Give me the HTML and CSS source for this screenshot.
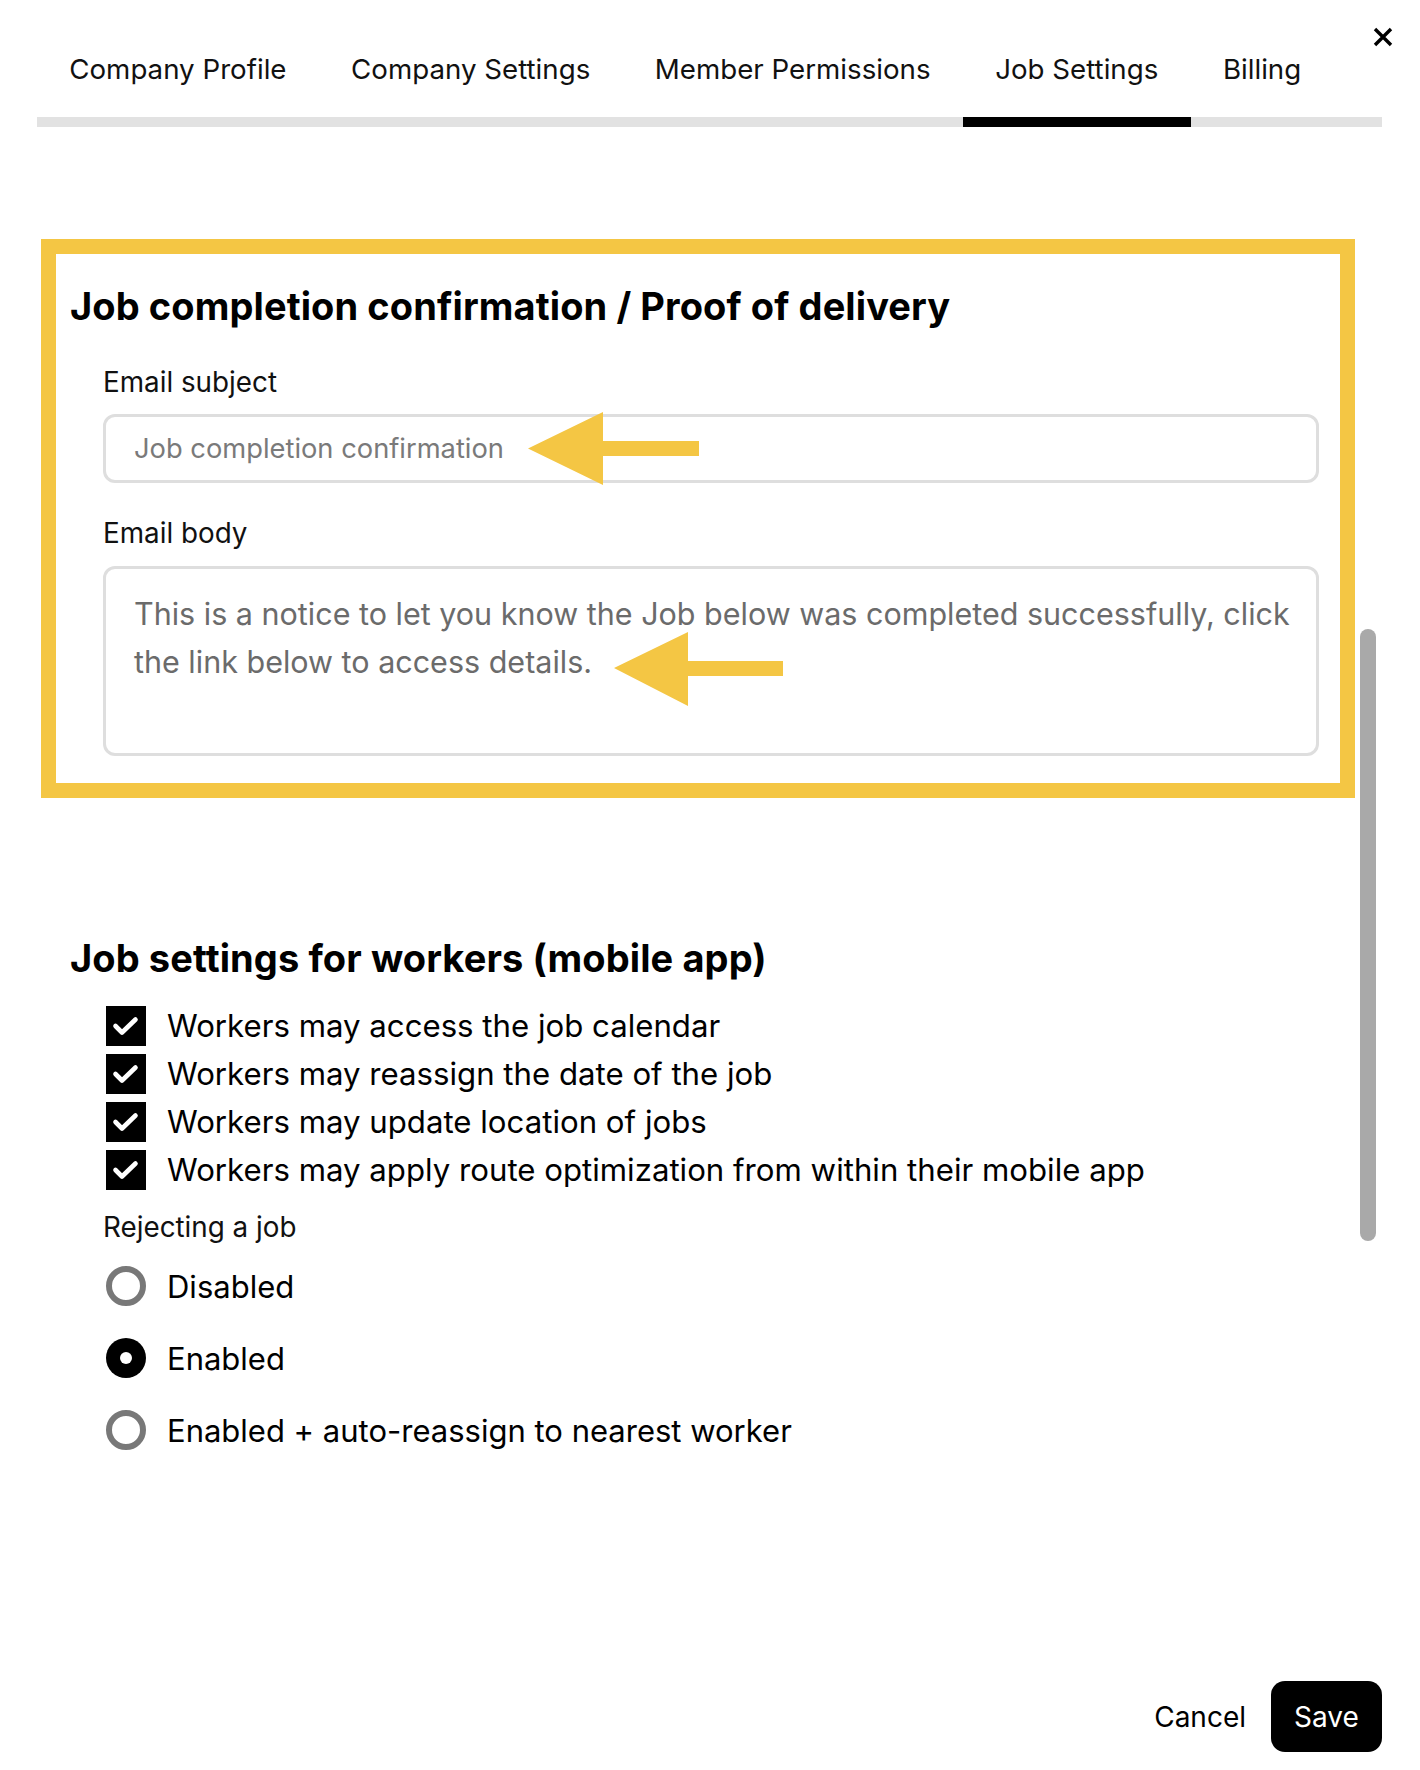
FILE: index.html
```html
<!DOCTYPE html>
<html lang="en">
<head>
<meta charset="utf-8">
<title>Job Settings</title>
<link rel="stylesheet" href="styles.css">
</head>
<body>
<div class="page">
  <header class="tabs-bar">
    <nav class="tabs">
      <a class="tab">Company Profile</a>
      <a class="tab">Company Settings</a>
      <a class="tab">Member Permissions</a>
      <a class="tab active">Job Settings</a>
      <a class="tab">Billing</a>
    </nav>
    <button class="close" aria-label="Close">
      <svg viewBox="0 0 20 20" width="20" height="20"><path d="M2 2 L18 18 M18 2 L2 18" stroke="#000" stroke-width="3.4" stroke-linecap="butt" fill="none"/></svg>
    </button>
  </header>

  <main class="content">
    <section class="highlight">
      <h2 class="section-title">Job completion confirmation / Proof of delivery</h2>
      <div class="fields">
        <div class="field-label">Email subject</div>
        <div class="input">
          <span class="placeholder">Job completion confirmation</span>
          <svg class="arrow arrow-subject" viewBox="0 0 171 73" width="171" height="73"><polygon points="0,36.5 75,0 75,29 171,29 171,44 75,44 75,73" fill="#f4c644"/></svg>
        </div>
        <div class="field-label body-label">Email body</div>
        <div class="textarea">
          <p class="body-text">This is a notice to let you know the Job below was completed successfully, click the link below to access details.</p>
          <svg class="arrow arrow-body" viewBox="0 0 169 74" width="169" height="74"><polygon points="0,36 74,0 74,29 169,29 169,44 74,44 74,74" fill="#f4c644"/></svg>
        </div>
      </div>
    </section>

    <section class="workers">
      <h2 class="section-title">Job settings for workers (mobile app)</h2>
      <ul class="checks">
        <li class="check-row"><span class="checkbox"><svg viewBox="0 0 40 40" width="40" height="40"><path d="M9.5 20 L16 26.5 L29.5 13.5" stroke="#fff" stroke-width="4.6" fill="none" stroke-linecap="round" stroke-linejoin="round"/></svg></span>Workers may access the job calendar</li>
        <li class="check-row"><span class="checkbox"><svg viewBox="0 0 40 40" width="40" height="40"><path d="M9.5 20 L16 26.5 L29.5 13.5" stroke="#fff" stroke-width="4.6" fill="none" stroke-linecap="round" stroke-linejoin="round"/></svg></span>Workers may reassign the date of the job</li>
        <li class="check-row"><span class="checkbox"><svg viewBox="0 0 40 40" width="40" height="40"><path d="M9.5 20 L16 26.5 L29.5 13.5" stroke="#fff" stroke-width="4.6" fill="none" stroke-linecap="round" stroke-linejoin="round"/></svg></span>Workers may update location of jobs</li>
        <li class="check-row"><span class="checkbox"><svg viewBox="0 0 40 40" width="40" height="40"><path d="M9.5 20 L16 26.5 L29.5 13.5" stroke="#fff" stroke-width="4.6" fill="none" stroke-linecap="round" stroke-linejoin="round"/></svg></span>Workers may apply route optimization from within their mobile app</li>
      </ul>
      <div class="field-label reject-label">Rejecting a job</div>
      <ul class="radios">
        <li class="radio-row"><span class="radio"></span>Disabled</li>
        <li class="radio-row"><span class="radio checked"></span>Enabled</li>
        <li class="radio-row"><span class="radio"></span>Enabled + auto-reassign to nearest worker</li>
      </ul>
    </section>
  </main>

  <footer class="actions">
    <button class="btn-cancel">Cancel</button>
    <button class="btn-save">Save</button>
  </footer>

  <div class="scroll-thumb"></div>
</div>
</body>
</html>
```

FILE: styles.css
```css
* { box-sizing: border-box; }

html, body {
  margin: 0;
  padding: 0;
  background: #fff;
  overflow: hidden;
}

body {
  font-family: "Inter", "Noto Sans", sans-serif;
  color: #000;
}

.page {
  position: relative;
  width: 1420px;
  height: 1770px;
  display: flex;
  flex-direction: column;
}

/* Tabs */
.tabs-bar {
  position: relative;
  padding: 0 38px 0 37px;
}

.tabs {
  display: flex;
  border-bottom: 10px solid #e2e2e2;
}

.tab {
  padding: 53px 32.3px 32px;
  margin-bottom: -10px;
  border-bottom: 10px solid transparent;
  font-size: 27.7px;
  line-height: 32px;
  color: #111;
  white-space: nowrap;
}

.tab.active {
  border-bottom-color: #000;
}

.close {
  position: absolute;
  top: 27px;
  right: 27px;
  width: 20px;
  height: 20px;
  padding: 0;
  border: 0;
  background: none;
  display: flex;
}

/* Content */
.content {
  display: flex;
  flex-direction: column;
}

.section-title {
  margin: 0;
  font-size: 38px;
  line-height: 46px;
  font-weight: 700;
  letter-spacing: 0.1px;
}

.highlight {
  margin: 112px 65px 0 41px;
  border: 15px solid #f4c644;
  padding: 29px 21px 27px 14px;
}

.fields {
  padding-left: 33px;
}

.field-label {
  font-size: 27.8px;
  line-height: 32px;
  margin-top: 37px;
  color: #111;
}

.body-label {
  margin-top: 34px;
}

.input {
  position: relative;
  margin-top: 16px;
  height: 69px;
  border: 3px solid #dedede;
  border-radius: 12px;
  padding-left: 28px;
  display: flex;
  align-items: center;
}

.placeholder {
  font-size: 27.3px;
  color: #7a7a7a;
}

.textarea {
  position: relative;
  margin-top: 17px;
  height: 190px;
  border: 3px solid #dedede;
  border-radius: 12px;
  padding: 21px 20px 0 28px;
}

.body-text {
  margin: 0;
  font-size: 30.5px;
  line-height: 48px;
  color: #6b6b6b;
}

.arrow {
  position: absolute;
  display: block;
}

.arrow-subject {
  left: 422px;
  top: -5px;
}

.arrow-body {
  left: 508px;
  top: 63px;
}

/* Workers section */
.workers {
  margin-top: 137px;
  padding-left: 70px;
}

.checks {
  list-style: none;
  margin: 21px 0 0;
  padding: 0 0 0 36px;
}

.check-row {
  height: 48px;
  display: flex;
  align-items: center;
  gap: 21px;
  font-size: 31.2px;
}

.checkbox {
  width: 40px;
  height: 40px;
  background: #000;
  display: flex;
  flex: none;
}

.reject-label {
  margin-top: 17px;
  padding-left: 33px;
}

.radios {
  list-style: none;
  margin: 7px 0 0;
  padding: 0 0 0 36px;
}

.radio-row {
  height: 72px;
  display: flex;
  align-items: center;
  gap: 21px;
  font-size: 31px;
}

.radio {
  width: 40px;
  height: 40px;
  border-radius: 50%;
  border: 6px solid #787878;
  flex: none;
}

.radio.checked {
  border: 0;
  background: #000;
  display: flex;
  align-items: center;
  justify-content: center;
}

.radio.checked::after {
  content: "";
  width: 12px;
  height: 12px;
  border-radius: 50%;
  background: #fff;
}

/* Footer */
.actions {
  margin-top: auto;
  display: flex;
  justify-content: flex-end;
  align-items: center;
  padding: 0 38px 18px;
}

.btn-cancel {
  background: none;
  border: 0;
  padding: 0;
  margin-right: 25px;
  font-family: inherit;
  font-size: 28px;
  color: #000;
}

.btn-save {
  width: 111px;
  height: 71px;
  border: 0;
  border-radius: 14px;
  background: #000;
  color: #fff;
  font-family: inherit;
  font-size: 28px;
}

.scroll-thumb {
  position: absolute;
  left: 1360px;
  top: 629px;
  width: 16px;
  height: 612px;
  border-radius: 8px;
  background: #a9a9a9;
}
```
